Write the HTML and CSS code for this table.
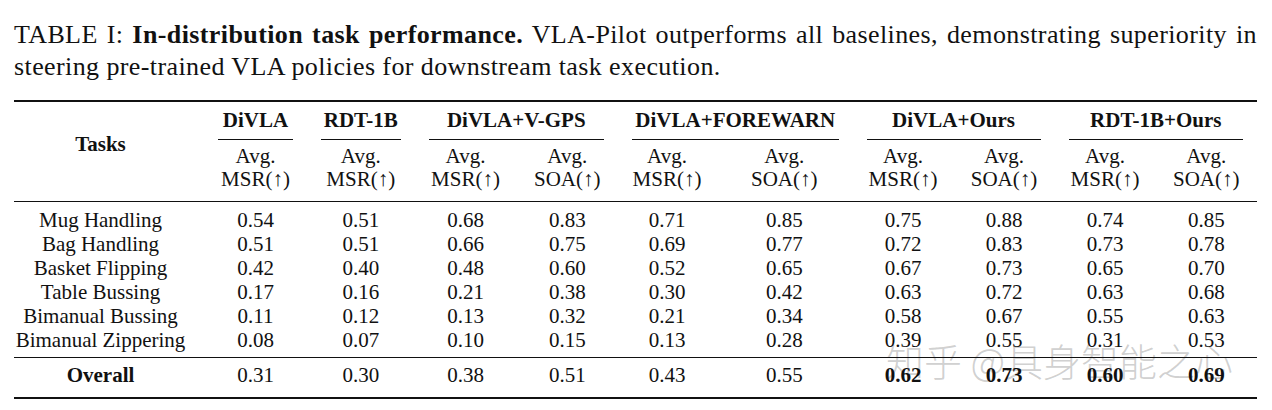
FILE: index.html
```html
<!DOCTYPE html>
<html lang="en">
<head>
<meta charset="utf-8">
<title>TABLE I</title>
<link rel="stylesheet" href="styles.css">
</head>
<body>
<div class="page">
  <p class="caption"><span class="cap-line1">TABLE I: <b>In-distribution task performance.</b> VLA-Pilot outperforms all baselines, demonstrating superiority in</span>steering pre-trained VLA policies for downstream task execution.</p>
  <table class="results">
    <colgroup>
      <col class="c0"><col class="c1"><col class="c2"><col class="c3"><col class="c4"><col class="c5"><col class="c6"><col class="c7"><col class="c8"><col class="c9"><col class="c10">
    </colgroup>
    <thead>
      <tr class="grp-row">
        <th rowspan="2" class="tasks">Tasks</th>
        <th class="grp"><div class="grp-label">DiVLA</div><div class="cmid"></div></th>
        <th class="grp"><div class="grp-label">RDT-1B</div><div class="cmid"></div></th>
        <th class="grp" colspan="2"><div class="grp-label">DiVLA+V-GPS</div><div class="cmid"></div></th>
        <th class="grp" colspan="2"><div class="grp-label">DiVLA+FOREWARN</div><div class="cmid"></div></th>
        <th class="grp" colspan="2"><div class="grp-label">DiVLA+Ours</div><div class="cmid"></div></th>
        <th class="grp" colspan="2"><div class="grp-label">RDT-1B+Ours</div><div class="cmid"></div></th>
      </tr>
      <tr class="metric-row">
        <th>Avg.<br>MSR(↑)</th>
        <th>Avg.<br>MSR(↑)</th>
        <th>Avg.<br>MSR(↑)</th>
        <th>Avg.<br>SOA(↑)</th>
        <th>Avg.<br>MSR(↑)</th>
        <th>Avg.<br>SOA(↑)</th>
        <th>Avg.<br>MSR(↑)</th>
        <th>Avg.<br>SOA(↑)</th>
        <th>Avg.<br>MSR(↑)</th>
        <th>Avg.<br>SOA(↑)</th>
      </tr>
    </thead>
    <tbody>
      <tr><td class="task">Mug Handling</td><td>0.54</td><td>0.51</td><td>0.68</td><td>0.83</td><td>0.71</td><td>0.85</td><td>0.75</td><td>0.88</td><td>0.74</td><td>0.85</td></tr>
      <tr><td class="task">Bag Handling</td><td>0.51</td><td>0.51</td><td>0.66</td><td>0.75</td><td>0.69</td><td>0.77</td><td>0.72</td><td>0.83</td><td>0.73</td><td>0.78</td></tr>
      <tr><td class="task">Basket Flipping</td><td>0.42</td><td>0.40</td><td>0.48</td><td>0.60</td><td>0.52</td><td>0.65</td><td>0.67</td><td>0.73</td><td>0.65</td><td>0.70</td></tr>
      <tr><td class="task">Table Bussing</td><td>0.17</td><td>0.16</td><td>0.21</td><td>0.38</td><td>0.30</td><td>0.42</td><td>0.63</td><td>0.72</td><td>0.63</td><td>0.68</td></tr>
      <tr><td class="task">Bimanual Bussing</td><td>0.11</td><td>0.12</td><td>0.13</td><td>0.32</td><td>0.21</td><td>0.34</td><td>0.58</td><td>0.67</td><td>0.55</td><td>0.63</td></tr>
      <tr><td class="task">Bimanual Zippering</td><td>0.08</td><td>0.07</td><td>0.10</td><td>0.15</td><td>0.13</td><td>0.28</td><td>0.39</td><td>0.55</td><td>0.31</td><td>0.53</td></tr>
    </tbody>
    <tfoot>
      <tr><th class="task">Overall</th><td>0.31</td><td>0.30</td><td>0.38</td><td>0.51</td><td>0.43</td><td>0.55</td><td class="best">0.62</td><td class="best">0.73</td><td class="best">0.60</td><td class="best">0.69</td></tr>
    </tfoot>
  </table>
  <div class="watermark">知乎 @具身智能之心</div>
</div>
</body>
</html>
```
FILE: styles.css
```css
html, body {
  margin: 0;
  padding: 0;
  background: #fff;
}

.page {
  position: relative;
  width: 1243px;
  padding: 19px 0 0 14px;
  color: #111;
  font-family: "Liberation Serif", "Times New Roman", serif;
}

.caption {
  margin: 0;
  font-size: 26px;
  letter-spacing: 0.4px;
  line-height: 32px;
}

.cap-line1 {
  display: block;
  text-align: justify;
  text-align-last: justify;
}

.results {
  position: relative;
  z-index: 1;
  margin-top: 17px;
  width: 1243px;
  table-layout: fixed;
  border-collapse: separate;
  border-spacing: 0;
  font-size: 21px;
  line-height: 24px;
}

.c0 { width: 190px; }
.c1 { width: 103px; }
.c2 { width: 107.5px; }
.c3 { width: 102px; }
.c4 { width: 101.5px; }
.c5 { width: 98px; }
.c6 { width: 136.5px; }
.c7 { width: 101px; }
.c8 { width: 101px; }
.c9 { width: 101px; }
.c10 { width: 101.5px; }

.results th,
.results td {
  padding: 0;
  text-align: center;
  vertical-align: top;
  white-space: nowrap;
}

.results td { font-weight: normal; }

.grp-row th {
  border-top: 2px solid #111;
  padding-top: 6px;
  font-weight: bold;
}

.cmid {
  margin: 7px 14px 0;
  border-top: 1px solid #111;
}

.tasks {
  padding-top: 30px !important;
  padding-right: 17px !important;
  border-bottom: 1px solid #111;
}

.metric-row th {
  font-weight: normal;
  line-height: 23px;
  padding: 5px 0 10px;
  border-bottom: 1px solid #111;
}

.task {
  padding-right: 17px !important;
}

tbody tr:first-child td { padding-top: 6px; }
tbody tr:last-child td {
  padding-bottom: 5px;
  border-bottom: 1px solid #111;
}

tfoot th,
tfoot td {
  padding-top: 5px !important;
  padding-bottom: 10px !important;
  border-bottom: 2px solid #111;
}

tfoot th { font-weight: bold; }
tfoot td.best { font-weight: bold; }

.watermark {
  position: absolute;
  z-index: 0;
  left: 886px;
  top: 338px;
  font-family: "Noto Sans CJK SC", "Noto Sans", sans-serif;
  font-weight: 300;
  font-size: 38px;
  line-height: 44px;
  color: rgba(150, 150, 150, 0.45);
  white-space: nowrap;
}
```
